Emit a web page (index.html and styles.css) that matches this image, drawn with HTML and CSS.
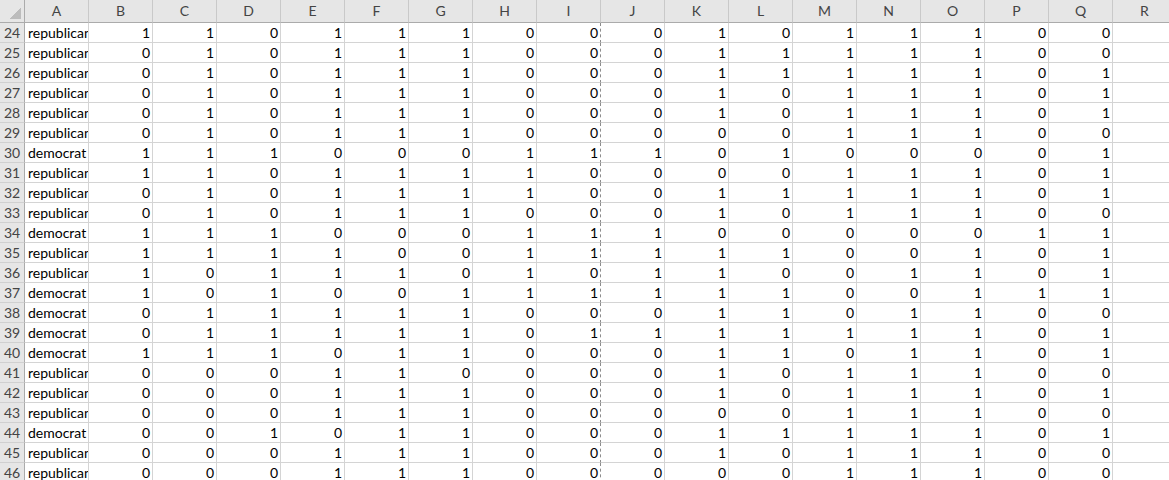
FILE: index.html
```html
<!DOCTYPE html>
<html lang="en">
<head>
  <meta charset="UTF-8">
  <title>Sheet1</title>
  <link rel="stylesheet" href="styles.css">
</head>
<body>
  <div class="sheet">
    <div class="row head">
      <span class="corner"></span><span>A</span><span>B</span><span>C</span><span>D</span><span>E</span><span>F</span><span>G</span><span>H</span><span>I</span><span>J</span><span>K</span><span>L</span><span>M</span><span>N</span><span>O</span><span>P</span><span>Q</span><span>R</span>
    </div>
    <div class="row"><span class="num">24</span><span class="txt">republican</span><span>1</span><span>1</span><span>0</span><span>1</span><span>1</span><span>1</span><span>0</span><span>0</span><span>0</span><span>1</span><span>0</span><span>1</span><span>1</span><span>1</span><span>0</span><span>0</span><span></span></div>
    <div class="row"><span class="num">25</span><span class="txt">republican</span><span>0</span><span>1</span><span>0</span><span>1</span><span>1</span><span>1</span><span>0</span><span>0</span><span>0</span><span>1</span><span>1</span><span>1</span><span>1</span><span>1</span><span>0</span><span>0</span><span></span></div>
    <div class="row"><span class="num">26</span><span class="txt">republican</span><span>0</span><span>1</span><span>0</span><span>1</span><span>1</span><span>1</span><span>0</span><span>0</span><span>0</span><span>1</span><span>1</span><span>1</span><span>1</span><span>1</span><span>0</span><span>1</span><span></span></div>
    <div class="row"><span class="num">27</span><span class="txt">republican</span><span>0</span><span>1</span><span>0</span><span>1</span><span>1</span><span>1</span><span>0</span><span>0</span><span>0</span><span>1</span><span>0</span><span>1</span><span>1</span><span>1</span><span>0</span><span>1</span><span></span></div>
    <div class="row"><span class="num">28</span><span class="txt">republican</span><span>0</span><span>1</span><span>0</span><span>1</span><span>1</span><span>1</span><span>0</span><span>0</span><span>0</span><span>1</span><span>0</span><span>1</span><span>1</span><span>1</span><span>0</span><span>1</span><span></span></div>
    <div class="row"><span class="num">29</span><span class="txt">republican</span><span>0</span><span>1</span><span>0</span><span>1</span><span>1</span><span>1</span><span>0</span><span>0</span><span>0</span><span>0</span><span>0</span><span>1</span><span>1</span><span>1</span><span>0</span><span>0</span><span></span></div>
    <div class="row"><span class="num">30</span><span class="txt">democrat</span><span>1</span><span>1</span><span>1</span><span>0</span><span>0</span><span>0</span><span>1</span><span>1</span><span>1</span><span>0</span><span>1</span><span>0</span><span>0</span><span>0</span><span>0</span><span>1</span><span></span></div>
    <div class="row"><span class="num">31</span><span class="txt">republican</span><span>1</span><span>1</span><span>0</span><span>1</span><span>1</span><span>1</span><span>1</span><span>0</span><span>0</span><span>0</span><span>0</span><span>1</span><span>1</span><span>1</span><span>0</span><span>1</span><span></span></div>
    <div class="row"><span class="num">32</span><span class="txt">republican</span><span>0</span><span>1</span><span>0</span><span>1</span><span>1</span><span>1</span><span>1</span><span>0</span><span>0</span><span>1</span><span>1</span><span>1</span><span>1</span><span>1</span><span>0</span><span>1</span><span></span></div>
    <div class="row"><span class="num">33</span><span class="txt">republican</span><span>0</span><span>1</span><span>0</span><span>1</span><span>1</span><span>1</span><span>0</span><span>0</span><span>0</span><span>1</span><span>0</span><span>1</span><span>1</span><span>1</span><span>0</span><span>0</span><span></span></div>
    <div class="row"><span class="num">34</span><span class="txt">democrat</span><span>1</span><span>1</span><span>1</span><span>0</span><span>0</span><span>0</span><span>1</span><span>1</span><span>1</span><span>0</span><span>0</span><span>0</span><span>0</span><span>0</span><span>1</span><span>1</span><span></span></div>
    <div class="row"><span class="num">35</span><span class="txt">republican</span><span>1</span><span>1</span><span>1</span><span>1</span><span>0</span><span>0</span><span>1</span><span>1</span><span>1</span><span>1</span><span>1</span><span>0</span><span>0</span><span>1</span><span>0</span><span>1</span><span></span></div>
    <div class="row"><span class="num">36</span><span class="txt">republican</span><span>1</span><span>0</span><span>1</span><span>1</span><span>1</span><span>0</span><span>1</span><span>0</span><span>1</span><span>1</span><span>0</span><span>0</span><span>1</span><span>1</span><span>0</span><span>1</span><span></span></div>
    <div class="row"><span class="num">37</span><span class="txt">democrat</span><span>1</span><span>0</span><span>1</span><span>0</span><span>0</span><span>1</span><span>1</span><span>1</span><span>1</span><span>1</span><span>1</span><span>0</span><span>0</span><span>1</span><span>1</span><span>1</span><span></span></div>
    <div class="row"><span class="num">38</span><span class="txt">democrat</span><span>0</span><span>1</span><span>1</span><span>1</span><span>1</span><span>1</span><span>0</span><span>0</span><span>0</span><span>1</span><span>1</span><span>0</span><span>1</span><span>1</span><span>0</span><span>0</span><span></span></div>
    <div class="row"><span class="num">39</span><span class="txt">democrat</span><span>0</span><span>1</span><span>1</span><span>1</span><span>1</span><span>1</span><span>0</span><span>1</span><span>1</span><span>1</span><span>1</span><span>1</span><span>1</span><span>1</span><span>0</span><span>1</span><span></span></div>
    <div class="row"><span class="num">40</span><span class="txt">democrat</span><span>1</span><span>1</span><span>1</span><span>0</span><span>1</span><span>1</span><span>0</span><span>0</span><span>0</span><span>1</span><span>1</span><span>0</span><span>1</span><span>1</span><span>0</span><span>1</span><span></span></div>
    <div class="row"><span class="num">41</span><span class="txt">republican</span><span>0</span><span>0</span><span>0</span><span>1</span><span>1</span><span>0</span><span>0</span><span>0</span><span>0</span><span>1</span><span>0</span><span>1</span><span>1</span><span>1</span><span>0</span><span>0</span><span></span></div>
    <div class="row"><span class="num">42</span><span class="txt">republican</span><span>0</span><span>0</span><span>0</span><span>1</span><span>1</span><span>1</span><span>0</span><span>0</span><span>0</span><span>1</span><span>0</span><span>1</span><span>1</span><span>1</span><span>0</span><span>1</span><span></span></div>
    <div class="row"><span class="num">43</span><span class="txt">republican</span><span>0</span><span>0</span><span>0</span><span>1</span><span>1</span><span>1</span><span>0</span><span>0</span><span>0</span><span>0</span><span>0</span><span>1</span><span>1</span><span>1</span><span>0</span><span>0</span><span></span></div>
    <div class="row"><span class="num">44</span><span class="txt">democrat</span><span>0</span><span>0</span><span>1</span><span>0</span><span>1</span><span>1</span><span>0</span><span>0</span><span>0</span><span>1</span><span>1</span><span>1</span><span>1</span><span>1</span><span>0</span><span>1</span><span></span></div>
    <div class="row"><span class="num">45</span><span class="txt">republican</span><span>0</span><span>0</span><span>0</span><span>1</span><span>1</span><span>1</span><span>0</span><span>0</span><span>0</span><span>1</span><span>0</span><span>1</span><span>1</span><span>1</span><span>0</span><span>0</span><span></span></div>
    <div class="row"><span class="num">46</span><span class="txt">republican</span><span>0</span><span>0</span><span>0</span><span>1</span><span>1</span><span>1</span><span>0</span><span>0</span><span>0</span><span>0</span><span>0</span><span>1</span><span>1</span><span>1</span><span>0</span><span>0</span><span></span></div>
  </div>
</body>
</html>
```

FILE: styles.css
```css
* {
  box-sizing: border-box;
  margin: 0;
  padding: 0;
}

body {
  margin: 0;
  overflow: hidden;
  background-color: #ffffff;
  font-family: Lato, "Liberation Sans", sans-serif;
  font-size: 14px;
  color: #000000;
}

.sheet {
  width: 1177px;
}

.row {
  display: grid;
  grid-template-columns: 25px repeat(18, 64px);
  height: 20px;
}

.row > span {
  border-right: 1px solid #d4d4d4;
  border-bottom: 1px solid #d4d4d4;
  padding: 0 2px 0 3px;
  line-height: 19px;
  text-align: right;
  white-space: nowrap;
  overflow: hidden;
}

/* page break after column I */
.row > span:nth-child(10) {
  border-right: 1px dashed #8c8c8c;
}

.row > .txt {
  text-align: left;
}

.row > .num {
  background-color: #e6e6e6;
  color: #444444;
  text-align: center;
  padding: 0;
  border-right-color: #ababab;
  border-bottom-color: #d0d0d0;
}

.head {
  height: 23px;
}

.head > span,
.head > span:nth-child(10) {
  background-color: #e6e6e6;
  color: #444444;
  text-align: center;
  line-height: 22px;
  padding: 0;
  border-right: 1px solid #c9c9c9;
  border-bottom: 1px solid #ababab;
}

.head > .corner {
  display: flex;
  justify-content: flex-end;
  align-items: flex-end;
  padding: 0 3px 3px 0;
  border-right-color: #ababab;
}

.corner::after {
  content: "";
  width: 12px;
  height: 11px;
  background: linear-gradient(to bottom right, transparent 50%, #bcbcbc 50%);
}
```
